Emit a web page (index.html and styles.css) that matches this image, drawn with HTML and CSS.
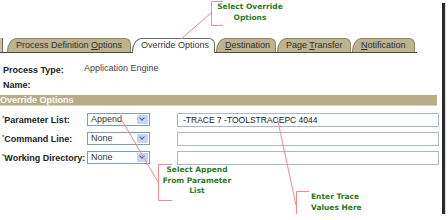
FILE: index.html
```html
<!DOCTYPE HTML>
<html lang="en">
<head>
  <meta charset="UTF-8">
  <title>override options</title>
  <link rel="stylesheet" href="styles.css">
</head>
<body>

	<div class="shot">

	  <div class="tabs">
		<div class="tab-stub"></div>
		<div class="tab tab-process">Process Definition <u>O</u>ptions</div>
		<div class="tab tab-override tab-active">Override Options</div>
		<div class="tab tab-dest"><u>D</u>estination</div>
		<div class="tab tab-transfer">Page <u>T</u>ransfer</div>
		<div class="tab tab-notify"><u>N</u>otification</div>
	  </div>

	  <div class="info">
		<div class="info-label">Process Type:</div>
		<div class="info-value">Application Engine</div>
		<div class="info-label">Name:</div>
		<div class="info-value"></div>
	  </div>

	  <div class="section-head">Override Options</div>

	  <div class="fields">
		<div class="field-label"><span class="req">*</span>Parameter List:</div>
		<div class="select"><span class="select-text">Append</span><span class="select-btn"></span></div>
		<div class="spacer"></div>
		<div class="input">-TRACE 7 -TOOLSTRACEPC 4044</div>

		<div class="field-label"><span class="req">*</span>Command Line:</div>
		<div class="select"><span class="select-text">None</span><span class="select-btn"></span></div>
		<div class="spacer"></div>
		<div class="input"></div>

		<div class="field-label"><span class="req">*</span>Working Directory:</div>
		<div class="select"><span class="select-text">None</span><span class="select-btn"></span></div>
		<div class="spacer"></div>
		<div class="input"></div>
	  </div>

	  <!-- callouts sit on top of the form -->
	  <svg class="leaders" width="448" height="220" viewBox="0 0 448 220">
		<polyline points="223,1.5 211.5,1.5 211.5,25.5 223,25.5" />
		<line x1="211" y1="13" x2="181" y2="39" />
		<polyline points="172,164.5 158.5,164.5 158.5,200.5 172,200.5" />
		<line x1="120" y1="117" x2="158" y2="182" />
		<polyline points="309,191.5 296.5,191.5 296.5,214" />
		<line x1="277" y1="117" x2="296" y2="205" />
	  </svg>

	  <div class="callout callout-override">Select Override<br>Options</div>
	  <div class="callout callout-append">Select Append<br>From Parameter<br>List</div>
	  <div class="callout callout-trace">Enter Trace<br>Values Here</div>

	</div>

</body>
</html>
```

FILE: styles.css
```css
	 html, body { margin:0; background:#fff }

	 .shot
	 {
		position:relative;
		width:442px;
		height:214px;
		background:#fff;
		box-shadow: 3px 3px 1px #2b2b2b;
		font-family: "Liberation Sans", Arial, sans-serif;
		font-size:9px;
		color:#222;
	 }

	 /* tab strip */
	 .tabs
	 {
		display:flex;
		align-items:flex-end;
		padding-top:38px;
		width:417px;
		height:14px;
		border-bottom:1px solid #4a4a4a;
	 }

	 .tab-stub
	 {
		width:2px;
		height:14px;
		background:#c9c1a0;
		border-right:1px solid #6d6853;
		margin-right:4px;
	 }

	 .tab
	 {
		box-sizing:border-box;
		height:14px;
		line-height:13px;
		padding-left:8px;
		background:#bdb38f;
		border:1px solid #8c8668;
		border-bottom:none;
		border-radius:10px 6px 0 0 / 13px 6px 0 0;
		color:#2e2e2e;
		white-space:nowrap;
		margin-right:1px;
	 }

	 .tab u { text-decoration:underline }

	 .tab-process  { width:124px }
	 .tab-override { width:83px }
	 .tab-dest     { width:60px }
	 .tab-transfer { width:74px }
	 .tab-notify   { width:63px }

	 .tab-active
	 {
		background:#fff;
		border-color:#6a6a6a;
		height:15px;
		margin-bottom:-1px;
		color:#333;
	 }

	 /* process info */
	 .info
	 {
		display:grid;
		grid-template-columns:81px auto;
		grid-auto-rows:15px;
		align-items:center;
		padding:9px 0 0 3px;
	 }

	 .info-label { font-weight:bold; color:#222 }
	 .info-value { color:#444; margin-top:-3px }

	 .section-head
	 {
		margin-top:3px;
		width:437px;
		height:10px;
		line-height:10px;
		background:#b6ac88;
		color:#fff;
		font-weight:bold;
		border-bottom:1px solid #d9d3bd;
	 }

	 /* override fields */
	 .fields
	 {
		display:grid;
		grid-template-columns:87px 63px 27px 262px;
		grid-auto-rows:13px;
		row-gap:6px;
		align-items:center;
		padding-top:7px;
	 }

	 .field-label
	 {
		padding-left:2px;
		font-weight:bold;
		color:#222;
		white-space:nowrap;
	 }

	 .req { font-size:6px; vertical-align:top; font-weight:normal }

	 .select
	 {
		box-sizing:border-box;
		height:13px;
		display:flex;
		align-items:stretch;
		border:1px solid #7f9db9;
		background:#fff;
	 }

	 .select-text
	 {
		flex:1;
		line-height:11px;
		padding-left:3px;
		color:#333;
	 }

	 .select-btn
	 {
		width:11px;
		margin:1px;
		background:#c7d6ef;
		border-radius:1px;
		position:relative;
	 }

	 .select-btn::after
	 {
		content:"";
		position:absolute;
		left:3px; top:1px;
		width:3px; height:3px;
		border-right:1.5px solid #3563b8;
		border-bottom:1.5px solid #3563b8;
		transform:rotate(45deg);
	 }

	 .input
	 {
		box-sizing:border-box;
		height:14px;
		line-height:12px;
		padding-left:5px;
		border:1px solid #a9b7c6;
		background:#fff;
		color:#222;
		font-size:8.5px;
	 }

	 /* callouts */
	 .leaders
	 {
		position:absolute;
		left:0; top:0;
		fill:none;
		stroke:#f28a8a;
		stroke-width:1;
	 }

	 .callout
	 {
		position:absolute;
		font-family:"DejaVu Sans", Verdana, sans-serif;
		font-weight:bold;
		font-size:7.5px;
		line-height:10.5px;
		color:#2a7a22;
	 }

	 .callout-override { left:214px; top:2px; width:72px; text-align:center }
	 .callout-append   { left:162px; top:165px; width:70px; text-align:center }
	 .callout-trace    { left:311px; top:192px; text-align:left }
```
